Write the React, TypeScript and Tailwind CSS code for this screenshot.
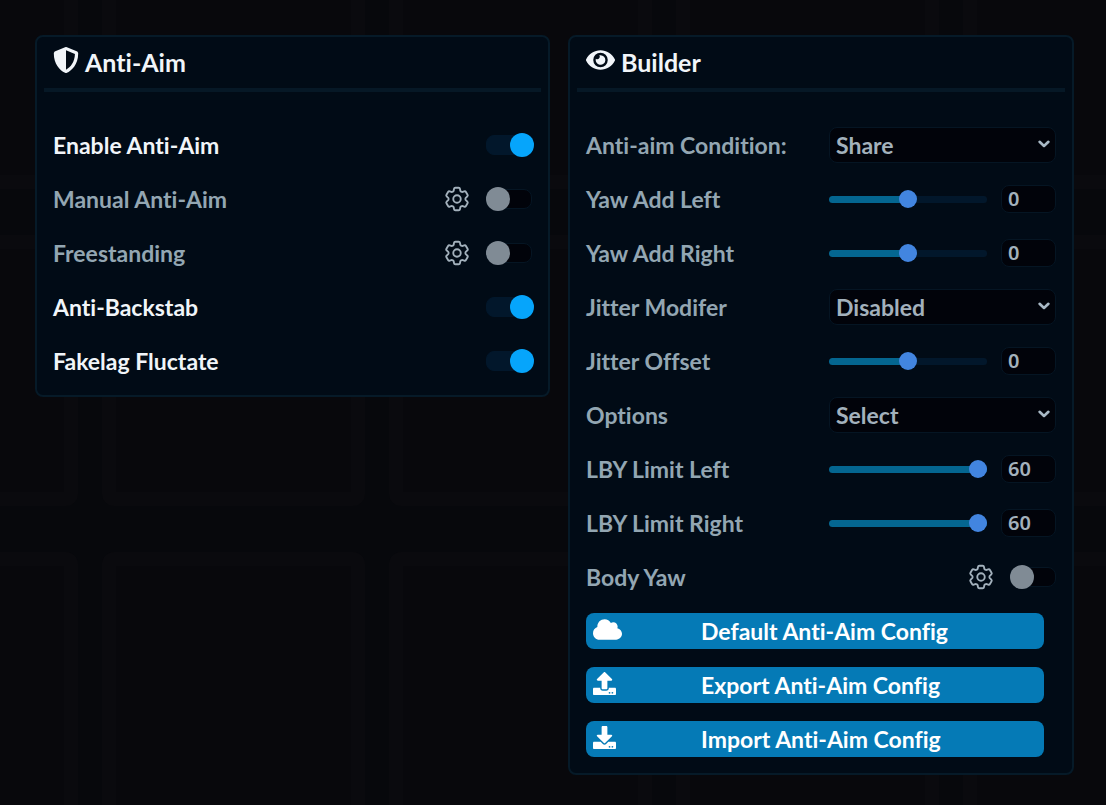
import React, { useState } from 'react';

import { FaCloud, FaDownload, FaEye, FaShieldAlt, FaUpload } from 'react-icons/fa';
import { HiOutlineCog6Tooth } from 'react-icons/hi2';

interface IPanelProps {
    title: string;
    icon: React.ReactNode;
    children: React.ReactNode;
};

function Panel(props: IPanelProps) {
    return (
        <section className="rounded-lg border-2 border-[#061a28] bg-[#010b16] pb-[7px]">
            <h2 className="mx-[7px] mb-[26px] flex h-[55px] items-center gap-[6px] border-b-4 border-[#061826] px-[9px] pb-[2px] text-[25px] font-bold text-[#f1f5f9]">
                {props.icon}
                {props.title}
            </h2>

            <div className="px-4">{props.children}</div>
        </section>
    );
}

interface IToggleRowProps {
    id: string;
    label: string;
    checked?: boolean;
    settings?: boolean;
};

function ToggleRow(props: IToggleRowProps) {
    const [checked, setChecked] = useState(!!props.checked);

    return (
        <div className="flex h-[54px] items-center">
            <label htmlFor={props.id} className={`flex-auto ${checked? "text-[#f1f5f9]": "text-[#93a6b2]"}`}>
                {props.label}
            </label>

            {props.settings && (
                <button type="button" aria-label={`${props.label} settings`} className="mr-[14px] text-[#a3b1bc]">
                    <HiOutlineCog6Tooth className="h-[30px] w-[30px]"/>
                </button>
            )}

            <input
            id={props.id}
            type="checkbox"
            role="switch"
            checked={checked}
            onChange={e => setChecked(e.target.checked)}
            className="relative h-5 w-[46px] appearance-none rounded-lg border border-[#051523] bg-[#01030a] before:absolute before:-top-[3px] before:-left-px before:h-6 before:w-6 before:rounded-full before:bg-[#808b95] checked:border-[#02172b] checked:bg-[#02172b] checked:before:left-[23px] checked:before:bg-[#06a5fb]"/>
        </div>
    );
}

interface ISelectRowProps {
    id: string;
    label: string;
    options: string[];
};

function SelectRow(props: ISelectRowProps) {
    return (
        <div className="flex h-[54px] items-center text-[#93a6b2]">
            <label htmlFor={props.id} className="flex-auto">{props.label}</label>

            <div className="relative w-[227px]">
                <select id={props.id} className="block h-9 w-full appearance-none rounded-lg border border-[#051523] bg-[#01030a] px-[6px] text-[#a3b1bc]">
                    {props.options.map(option => <option key={option}>{option}</option>)}
                </select>

                <svg viewBox="0 0 12 8" fill="none" stroke="#a9b9c6" strokeWidth="2.6" strokeLinecap="round" strokeLinejoin="round" className="pointer-events-none absolute top-[13px] right-[6px] h-2 w-3">
                    <path d="M1.6 1.8 6 6l4.4-4.2"/>
                </svg>
            </div>
        </div>
    );
}

interface ISliderRowProps {
    id: string;
    label: string;
    min: number;
    max: number;
    value: number;
};

function SliderRow(props: ISliderRowProps) {
    const [value, setValue] = useState(props.value);
    const percent = (value - props.min) / (props.max - props.min) * 100;

    return (
        <div className="flex h-[54px] items-center text-[#93a6b2]">
            <label htmlFor={props.id} className="flex-auto">{props.label}</label>

            <input
            id={props.id}
            type="range"
            min={props.min}
            max={props.max}
            value={value}
            onChange={e => setValue(Number(e.target.value))}
            style={{backgroundImage: `linear-gradient(to right, #046690 ${percent}%, #02172b ${percent}%)`}}
            className="mr-[14px] h-[7px] w-[158px] appearance-none rounded-full [&::-webkit-slider-thumb]:h-[18px] [&::-webkit-slider-thumb]:w-[18px] [&::-webkit-slider-thumb]:appearance-none [&::-webkit-slider-thumb]:rounded-full [&::-webkit-slider-thumb]:bg-[#4285e0]"/>

            <input
            type="text"
            aria-label={`${props.label} value`}
            value={value}
            onChange={e => setValue(Number(e.target.value) || 0)}
            className="h-7 w-[55px] rounded-lg border border-[#051523] bg-[#01030a] px-[6px] font-['Noto_Sans',sans-serif] text-xl font-semibold text-[#a3b1bc]"/>
        </div>
    );
}

interface IConfigButtonProps {
    label: string;
    icon: React.ReactNode;
};

function ConfigButton(props: IConfigButtonProps) {
    return (
        <div className="flex h-[54px] items-center pr-3">
            <button type="button" className="flex h-9 flex-auto items-center rounded-lg bg-[#057ab6] pl-[7px] text-white">
                <span className="w-27 pb-1">{props.icon}</span>
                {props.label}
            </button>
        </div>
    );
}

// dim tiles behind the panels
function Backdrop() {
    return (
        <div className="absolute inset-0 overflow-hidden">
            <div className="-mt-[82px] -ml-[185px] grid w-[1411px] grid-cols-5 gap-x-6 gap-y-[46px]">
                {Array.from({length: 15}, (_, i) => (
                    <div key={i} className="h-[271px] rounded-xl border-[14px] border-[#0a0a0e] bg-[#08080c]"/>
                ))}
            </div>
        </div>
    );
}

function App() {
    return (
        <main className="relative min-h-screen bg-[#07080c] font-['Lato',sans-serif] text-[23px] leading-7 font-bold [font-variant-ligatures:none]">
            <Backdrop/>

            <div className="relative grid grid-cols-[515fr_506fr] items-start gap-[18px] pt-[35px] pr-8 pb-[30px] pl-[35px]">
                <Panel title="Anti-Aim" icon={<FaShieldAlt className="mb-1 h-[26px] w-[26px]"/>}>
                    <ToggleRow id="enable" label="Enable Anti-Aim" checked/>
                    <ToggleRow id="manual" label="Manual Anti-Aim" settings/>
                    <ToggleRow id="freestanding" label="Freestanding" settings/>
                    <ToggleRow id="backstab" label="Anti-Backstab" checked/>
                    <ToggleRow id="fakelag" label="Fakelag Fluctate" checked/>
                </Panel>

                <Panel title="Builder" icon={<FaEye className="mb-1 h-[26px] w-[29px]"/>}>
                    <SelectRow id="condition" label="Anti-aim Condition:" options={["Share"]}/>
                    <SliderRow id="yaw-left" label="Yaw Add Left" min={-180} max={180} value={0}/>
                    <SliderRow id="yaw-right" label="Yaw Add Right" min={-180} max={180} value={0}/>
                    <SelectRow id="jitter" label="Jitter Modifer" options={["Disabled"]}/>
                    <SliderRow id="jitter-offset" label="Jitter Offset" min={-180} max={180} value={0}/>
                    <SelectRow id="options" label="Options" options={["Select"]}/>
                    <SliderRow id="lby-left" label="LBY Limit Left" min={0} max={60} value={60}/>
                    <SliderRow id="lby-right" label="LBY Limit Right" min={0} max={60} value={60}/>
                    <ToggleRow id="body-yaw" label="Body Yaw" settings/>
                    <ConfigButton label="Default Anti-Aim Config" icon={<FaCloud className="h-[29px] w-[29px]"/>}/>
                    <ConfigButton label="Export Anti-Aim Config" icon={<FaUpload className="h-[23px] w-[23px]"/>}/>
                    <ConfigButton label="Import Anti-Aim Config" icon={<FaDownload className="h-[23px] w-[23px]"/>}/>
                </Panel>
            </div>
        </main>
    );
}

export default App;
